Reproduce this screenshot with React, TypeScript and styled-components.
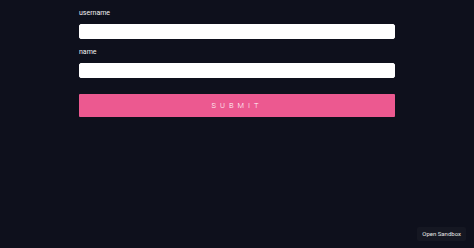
import styled, { createGlobalStyle } from "styled-components"

const Global = createGlobalStyle`
  html, body {
    margin: 0;
    padding: 0;
    background: #0e101c;
  }
  body {
    font-family: Roboto, "Liberation Sans", sans-serif;
    min-height: 248px;
  }
`

const Page = styled.div`
  min-height: 248px;
  background: #0e101c;
`

const Form = styled.form`
  width: 316px;
  margin: 0 auto;
  padding-top: 8px;
  display: flex;
  flex-direction: column;
`

const Label = styled.label`
  display: block;
  color: #f2f2f2;
  font-size: 7px;
  font-weight: 400;
  line-height: 10px;
  margin-bottom: 6px;
`

const Input = styled.input`
  display: block;
  box-sizing: border-box;
  width: 100%;
  height: 15px;
  border: 1px solid #ffffff;
  border-radius: 2px;
  background: #ffffff;
  margin: 0 0 ${({ $gap }: { $gap: number }) => $gap}px;
  padding: 0 8px;
  font-size: 7px;
`

const Submit = styled.button`
  box-sizing: border-box;
  width: 100%;
  height: 23px;
  border: none;
  border-radius: 1px;
  background: #ec5990;
  color: #ffffff;
  text-transform: uppercase;
  font-family: Roboto, "Liberation Sans", sans-serif;
  font-size: 7.5px;
  font-weight: 300;
  letter-spacing: 4px;
  padding: 0;
`

const Sandbox = styled.a`
  position: fixed;
  right: 8px;
  bottom: 7px;
  padding: 3px 5px;
  background: #151722;
  color: #e6e6e6;
  font-family: Roboto, "Liberation Sans", sans-serif;
  font-size: 6px;
  line-height: 8px;
  border-radius: 2px;
  text-decoration: none;
`

export default function App() {
  return <Page>
    <Global />
    <Form onSubmit={e => e.preventDefault()}>
      <Label>username</Label>
      <Input $gap={8} />
      <Label>name</Label>
      <Input $gap={16} />
      <Submit type="submit">submit</Submit>
    </Form>
    <Sandbox href="#">Open Sandbox</Sandbox>
  </Page>
}
